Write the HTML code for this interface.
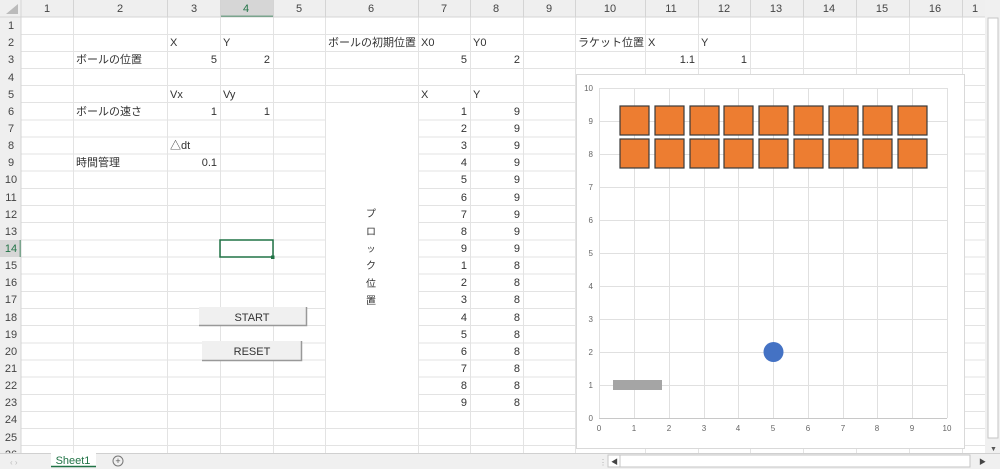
<!DOCTYPE html>
<html><head><meta charset="utf-8"><style>
body{margin:0;width:1000px;height:469px;overflow:hidden;background:#fff}
svg{display:block}
text{font-family:"Liberation Sans","Noto Sans CJK JP",sans-serif;fill:#333;font-size:11px}
.h{fill:#444;font-size:11px}
.ax{fill:#666;font-size:8px}
</style></head><body>
<svg width="1000" height="469" viewBox="0 0 1000 469">
<!-- header backgrounds -->
<rect x="0" y="0" width="1000" height="17" fill="#efefef"/>
<rect x="0" y="0" width="21" height="469" fill="#efefef"/>
<rect x="220" y="0" width="53" height="17" fill="#d6d6d6"/>
<line x1="220" y1="16.5" x2="273" y2="16.5" stroke="#217346" stroke-width="1.5"/>
<rect x="0" y="240" width="21" height="17" fill="#d6d6d6"/>
<line x1="20.5" y1="240" x2="20.5" y2="257" stroke="#217346" stroke-width="1.5"/>
<polygon points="6,14 18,4 18,14" fill="#bbb"/>
<!-- grid -->
<g stroke="#e3e3e3" stroke-width="1">
<line x1="21" y1="34.5" x2="985" y2="34.5"/><line x1="21" y1="51.5" x2="985" y2="51.5"/><line x1="21" y1="68.5" x2="985" y2="68.5"/><line x1="21" y1="85.5" x2="985" y2="85.5"/><line x1="21" y1="102.5" x2="985" y2="102.5"/>
</g>
<g stroke="#e3e3e3" stroke-width="1">
<line x1="21" y1="120" x2="325" y2="120"/><line x1="418" y1="120" x2="985" y2="120"/>
<line x1="21" y1="137" x2="325" y2="137"/><line x1="418" y1="137" x2="985" y2="137"/>
<line x1="21" y1="154" x2="325" y2="154"/><line x1="418" y1="154" x2="985" y2="154"/>
<line x1="21" y1="171" x2="325" y2="171"/><line x1="418" y1="171" x2="985" y2="171"/>
<line x1="21" y1="188.5" x2="325" y2="188.5"/><line x1="418" y1="188.5" x2="985" y2="188.5"/>
<line x1="21" y1="205.5" x2="325" y2="205.5"/><line x1="418" y1="205.5" x2="985" y2="205.5"/>
<line x1="21" y1="222.5" x2="325" y2="222.5"/><line x1="418" y1="222.5" x2="985" y2="222.5"/>
<line x1="21" y1="240" x2="325" y2="240"/><line x1="418" y1="240" x2="985" y2="240"/>
<line x1="21" y1="257" x2="325" y2="257"/><line x1="418" y1="257" x2="985" y2="257"/>
<line x1="21" y1="274" x2="325" y2="274"/><line x1="418" y1="274" x2="985" y2="274"/>
<line x1="21" y1="291.5" x2="325" y2="291.5"/><line x1="418" y1="291.5" x2="985" y2="291.5"/>
<line x1="21" y1="308.5" x2="325" y2="308.5"/><line x1="418" y1="308.5" x2="985" y2="308.5"/>
<line x1="21" y1="325.5" x2="325" y2="325.5"/><line x1="418" y1="325.5" x2="985" y2="325.5"/>
<line x1="21" y1="343" x2="325" y2="343"/><line x1="418" y1="343" x2="985" y2="343"/>
<line x1="21" y1="360" x2="325" y2="360"/><line x1="418" y1="360" x2="985" y2="360"/>
<line x1="21" y1="377" x2="325" y2="377"/><line x1="418" y1="377" x2="985" y2="377"/>
<line x1="21" y1="394.5" x2="325" y2="394.5"/><line x1="418" y1="394.5" x2="985" y2="394.5"/>
<line x1="21" y1="411.5" x2="985" y2="411.5"/><line x1="21" y1="428.5" x2="985" y2="428.5"/><line x1="21" y1="445.5" x2="985" y2="445.5"/>
<line x1="73.5" y1="17" x2="73.5" y2="453"/><line x1="167.5" y1="17" x2="167.5" y2="453"/><line x1="220.5" y1="17" x2="220.5" y2="453"/><line x1="273.5" y1="17" x2="273.5" y2="453"/><line x1="325.5" y1="17" x2="325.5" y2="453"/>
<line x1="418.5" y1="17" x2="418.5" y2="453"/><line x1="470.5" y1="17" x2="470.5" y2="453"/><line x1="523.5" y1="17" x2="523.5" y2="453"/><line x1="575.5" y1="17" x2="575.5" y2="453"/><line x1="645.5" y1="17" x2="645.5" y2="453"/><line x1="698.5" y1="17" x2="698.5" y2="453"/><line x1="750.5" y1="17" x2="750.5" y2="453"/><line x1="803.5" y1="17" x2="803.5" y2="453"/><line x1="856.5" y1="17" x2="856.5" y2="453"/><line x1="909.5" y1="17" x2="909.5" y2="453"/><line x1="962.5" y1="17" x2="962.5" y2="453"/>
</g>
<g stroke="#d4d4d4"><line x1="21" y1="0" x2="21" y2="453"/><line x1="0" y1="17" x2="985" y2="17"/>
<line x1="73.5" y1="0" x2="73.5" y2="17"/><line x1="167.5" y1="0" x2="167.5" y2="17"/><line x1="220.5" y1="0" x2="220.5" y2="17"/><line x1="273.5" y1="0" x2="273.5" y2="17"/><line x1="325.5" y1="0" x2="325.5" y2="17"/><line x1="418.5" y1="0" x2="418.5" y2="17"/><line x1="470.5" y1="0" x2="470.5" y2="17"/><line x1="523.5" y1="0" x2="523.5" y2="17"/><line x1="575.5" y1="0" x2="575.5" y2="17"/><line x1="645.5" y1="0" x2="645.5" y2="17"/><line x1="698.5" y1="0" x2="698.5" y2="17"/><line x1="750.5" y1="0" x2="750.5" y2="17"/><line x1="803.5" y1="0" x2="803.5" y2="17"/><line x1="856.5" y1="0" x2="856.5" y2="17"/><line x1="909.5" y1="0" x2="909.5" y2="17"/><line x1="962.5" y1="0" x2="962.5" y2="17"/></g>
<!-- column headers -->
<g class="h" text-anchor="middle">
<text class="h" x="47" y="12">1</text><text class="h" x="120" y="12">2</text><text class="h" x="194" y="12">3</text><text class="h" x="246" y="12" style="fill:#217346">4</text><text class="h" x="299" y="12">5</text><text class="h" x="371" y="12">6</text><text class="h" x="444" y="12">7</text><text class="h" x="496" y="12">8</text><text class="h" x="549" y="12">9</text><text class="h" x="610" y="12">10</text><text class="h" x="671" y="12">11</text><text class="h" x="724" y="12">12</text><text class="h" x="776" y="12">13</text><text class="h" x="829" y="12">14</text><text class="h" x="882" y="12">15</text><text class="h" x="935" y="12">16</text><text class="h" x="975" y="12">1</text>
</g>
<!-- row headers -->
<g text-anchor="middle">
<text class="h" x="11" y="29">1</text><text class="h" x="11" y="46">2</text><text class="h" x="11" y="63">3</text><text class="h" x="11" y="81">4</text><text class="h" x="11" y="98">5</text><text class="h" x="11" y="115">6</text><text class="h" x="11" y="132">7</text><text class="h" x="11" y="149">8</text><text class="h" x="11" y="166">9</text><text class="h" x="11" y="183">10</text><text class="h" x="11" y="201">11</text><text class="h" x="11" y="218">12</text><text class="h" x="11" y="235">13</text><text class="h" x="11" y="252" style="fill:#217346">14</text><text class="h" x="11" y="269">15</text><text class="h" x="11" y="286">16</text><text class="h" x="11" y="303">17</text><text class="h" x="11" y="321">18</text><text class="h" x="11" y="338">19</text><text class="h" x="11" y="355">20</text><text class="h" x="11" y="372">21</text><text class="h" x="11" y="389">22</text><text class="h" x="11" y="406">23</text><text class="h" x="11" y="423">24</text><text class="h" x="11" y="441">25</text><text class="h" x="11" y="458">26</text>
</g>
<!-- cell text -->
<text x="170" y="46">X</text><text x="223" y="46">Y</text><text x="328" y="46">ボールの初期位置</text><text x="421" y="46">X0</text><text x="473" y="46">Y0</text><text x="578" y="46">ラケット位置</text><text x="648" y="46">X</text><text x="701" y="46">Y</text>
<text x="76" y="63">ボールの位置</text>
<g text-anchor="end">
<text x="217" y="63">5</text><text x="270" y="63">2</text><text x="467" y="63">5</text><text x="520" y="63">2</text><text x="695" y="63">1.1</text><text x="747" y="63">1</text>
<text x="217" y="115">1</text><text x="270" y="115">1</text><text x="217" y="166">0.1</text>
<text x="467" y="115">1</text><text x="467" y="132">2</text><text x="467" y="149">3</text><text x="467" y="166">4</text><text x="467" y="183">5</text><text x="467" y="201">6</text><text x="467" y="218">7</text><text x="467" y="235">8</text><text x="467" y="252">9</text>
<text x="467" y="269">1</text><text x="467" y="286">2</text><text x="467" y="303">3</text><text x="467" y="321">4</text><text x="467" y="338">5</text><text x="467" y="355">6</text><text x="467" y="372">7</text><text x="467" y="389">8</text><text x="467" y="406">9</text>
<text x="520" y="115">9</text><text x="520" y="132">9</text><text x="520" y="149">9</text><text x="520" y="166">9</text><text x="520" y="183">9</text><text x="520" y="201">9</text><text x="520" y="218">9</text><text x="520" y="235">9</text><text x="520" y="252">9</text>
<text x="520" y="269">8</text><text x="520" y="286">8</text><text x="520" y="303">8</text><text x="520" y="321">8</text><text x="520" y="338">8</text><text x="520" y="355">8</text><text x="520" y="372">8</text><text x="520" y="389">8</text><text x="520" y="406">8</text>
</g>
<text x="170" y="98">Vx</text><text x="223" y="98">Vy</text><text x="421" y="98">X</text><text x="473" y="98">Y</text>
<text x="76" y="115">ボールの速さ</text>
<text x="170" y="149">△dt</text>
<text x="76" y="166">時間管理</text>
<g text-anchor="middle" style="font-size:10px">
<text x="371" y="217" style="font-size:10px">プ</text><text x="371" y="235" style="font-size:10px">ロ</text><text x="371" y="252" style="font-size:9px">ッ</text><text x="371" y="269" style="font-size:10px">ク</text><text x="371" y="287" style="font-size:10px">位</text><text x="371" y="304" style="font-size:10px">置</text>
</g>
<!-- selected cell -->
<rect x="220" y="240" width="53" height="17" fill="none" stroke="#217346" stroke-width="1.5"/>
<rect x="271" y="255.5" width="3.5" height="3.5" fill="#217346"/>
<!-- buttons -->
<rect x="199" y="307" width="107" height="18" fill="#f0f0f0"/>
<path d="M199 325.5H306.5V307" fill="none" stroke="#999" stroke-width="1.5"/>
<text x="252" y="321" text-anchor="middle" style="font-size:11px">START</text>
<rect x="202" y="341" width="99" height="19" fill="#f0f0f0"/>
<path d="M202 360.5H301.5V341" fill="none" stroke="#999" stroke-width="1.5"/>
<text x="252" y="355" text-anchor="middle" style="font-size:11px">RESET</text>
<!-- chart -->
<rect x="576.5" y="74.5" width="388" height="374" fill="#fff" stroke="#d9d9d9"/>
<g stroke="#e0e0e0">
<line x1="599" y1="88.5" x2="947" y2="88.5"/><line x1="599" y1="121.5" x2="947" y2="121.5"/><line x1="599" y1="154.5" x2="947" y2="154.5"/><line x1="599" y1="187.5" x2="947" y2="187.5"/><line x1="599" y1="220.5" x2="947" y2="220.5"/><line x1="599" y1="253.5" x2="947" y2="253.5"/><line x1="599" y1="286.5" x2="947" y2="286.5"/><line x1="599" y1="319.5" x2="947" y2="319.5"/><line x1="599" y1="352.5" x2="947" y2="352.5"/><line x1="599" y1="385.5" x2="947" y2="385.5"/>
<line x1="599.5" y1="88" x2="599.5" y2="418"/><line x1="634.5" y1="88" x2="634.5" y2="418"/><line x1="669.5" y1="88" x2="669.5" y2="418"/><line x1="704.5" y1="88" x2="704.5" y2="418"/><line x1="738.5" y1="88" x2="738.5" y2="418"/><line x1="773.5" y1="88" x2="773.5" y2="418"/><line x1="808.5" y1="88" x2="808.5" y2="418"/><line x1="843.5" y1="88" x2="843.5" y2="418"/><line x1="877.5" y1="88" x2="877.5" y2="418"/><line x1="912.5" y1="88" x2="912.5" y2="418"/><line x1="947.5" y1="88" x2="947.5" y2="418"/>
</g>
<line x1="599" y1="418.5" x2="947" y2="418.5" stroke="#c8c8c8"/>
<g text-anchor="end">
<text class="ax" x="593" y="91">10</text><text class="ax" x="593" y="124">9</text><text class="ax" x="593" y="157">8</text><text class="ax" x="593" y="190">7</text><text class="ax" x="593" y="223">6</text><text class="ax" x="593" y="256">5</text><text class="ax" x="593" y="289">4</text><text class="ax" x="593" y="322">3</text><text class="ax" x="593" y="355">2</text><text class="ax" x="593" y="388">1</text><text class="ax" x="593" y="421">0</text>
</g>
<g text-anchor="middle">
<text class="ax" x="599" y="431">0</text><text class="ax" x="634" y="431">1</text><text class="ax" x="669" y="431">2</text><text class="ax" x="704" y="431">3</text><text class="ax" x="738" y="431">4</text><text class="ax" x="773" y="431">5</text><text class="ax" x="808" y="431">6</text><text class="ax" x="843" y="431">7</text><text class="ax" x="877" y="431">8</text><text class="ax" x="912" y="431">9</text><text class="ax" x="947" y="431">10</text>
</g>
<g fill="#ed7d31" stroke="#3a3a3a" stroke-width="1.2">
<rect x="620" y="106" width="29" height="29"/><rect x="655" y="106" width="29" height="29"/><rect x="690" y="106" width="29" height="29"/><rect x="724" y="106" width="29" height="29"/><rect x="759" y="106" width="29" height="29"/><rect x="794" y="106" width="29" height="29"/><rect x="829" y="106" width="29" height="29"/><rect x="863" y="106" width="29" height="29"/><rect x="898" y="106" width="29" height="29"/>
<rect x="620" y="139" width="29" height="29"/><rect x="655" y="139" width="29" height="29"/><rect x="690" y="139" width="29" height="29"/><rect x="724" y="139" width="29" height="29"/><rect x="759" y="139" width="29" height="29"/><rect x="794" y="139" width="29" height="29"/><rect x="829" y="139" width="29" height="29"/><rect x="863" y="139" width="29" height="29"/><rect x="898" y="139" width="29" height="29"/>
</g>
<circle cx="773.5" cy="352" r="10" fill="#4472c4"/>
<rect x="613" y="380" width="49" height="10" fill="#a5a5a5"/>
<!-- vertical scrollbar -->
<rect x="985" y="0" width="15" height="453" fill="#f0f0f0"/>
<rect x="988" y="18" width="10" height="420" fill="#fff" stroke="#c6c6c6"/>
<text x="990" y="451" style="font-size:7px;fill:#555">▼</text>
<!-- tab bar -->
<rect x="0" y="453" width="1000" height="16" fill="#f0f0f0"/>
<line x1="0" y1="453.5" x2="1000" y2="453.5" stroke="#d0d0d0"/>
<text x="10" y="465" style="font-size:8px;fill:#bbb">‹ ›</text>
<rect x="51" y="453" width="45" height="14" fill="#fff"/>
<line x1="51" y1="466.5" x2="96" y2="466.5" stroke="#217346" stroke-width="1.5"/>
<text x="73" y="464" text-anchor="middle" style="font-size:11px;fill:#217346">Sheet1</text>
<circle cx="118" cy="461" r="5" fill="none" stroke="#777"/>
<text x="118" y="464" text-anchor="middle" style="font-size:9px;fill:#555">+</text>
<text x="599" y="465" style="font-size:8px;fill:#aaa">⋮</text>
<rect x="608" y="455" width="12" height="12" fill="#fff" stroke="#c6c6c6"/>
<text x="611" y="464" style="font-size:7px;fill:#444">◀</text>
<rect x="620" y="455" width="350" height="12" fill="#fff" stroke="#c6c6c6"/>
<text x="979" y="464" style="font-size:7px;fill:#444">▶</text>
</svg>
</body></html>
